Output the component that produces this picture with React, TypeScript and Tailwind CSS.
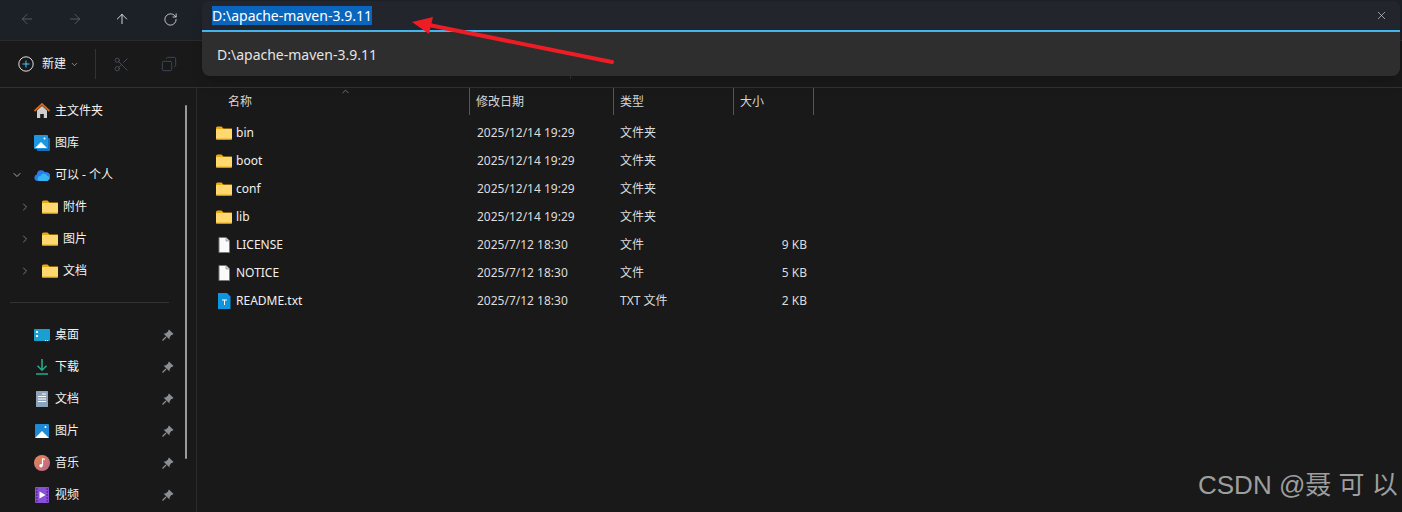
import { ArrowLeft, ArrowRight, ArrowUp, RotateCw, Scissors, Copy, X, ChevronDown, ChevronRight, ChevronUp } from "lucide-react";
import type { ReactNode } from "react";

const FONT = "[font-family:'Noto_Sans','Noto_Sans_CJK_SC',sans-serif]";

function FolderIcon() {
  return (
    <svg width="16" height="14" viewBox="0 0 16 14" className="shrink-0">
      <path d="M0 2a1.5 1.5 0 0 1 1.5-1.5h4L7.5 2.5H16V5H0z" fill="#eeaa0c" />
      <rect x="0" y="3" width="16" height="10.5" rx="1" fill="#ffd86f" />
      <rect x="0" y="12.5" width="16" height="1" rx="0.5" fill="#e5a91f" />
    </svg>
  );
}

function FileIcon() {
  return (
    <svg width="16" height="16" viewBox="0 0 16 16" className="shrink-0">
      <path d="M3 .5h7L13.5 4v11.5H3z" fill="#fafafa" stroke="#7a7a7a" />
      <path d="M10 .5V4h3.5" fill="#d8d8d8" stroke="#7a7a7a" strokeWidth="0.6" />
    </svg>
  );
}

function TextFileIcon() {
  return (
    <svg width="16" height="16" viewBox="0 0 16 16" className="shrink-0">
      <path d="M2 0h9l3.5 3.5V16H2z" fill="#0f95df" />
      <path d="M6 7h5M8.5 7v5" stroke="#fff" strokeWidth="1" />
    </svg>
  );
}

function HomeIcon() {
  return (
    <svg width="16" height="16" viewBox="0 0 16 16">
      <path d="M3 7.5 8 3l5 4.5V15H9.8v-4H6.2v4H3z" fill="#cfcfcf" />
      <path d="M0.5 8 8 1l7.5 7" fill="none" stroke="#d9691a" strokeWidth="1.8" />
    </svg>
  );
}

function GalleryIcon() {
  return (
    <svg width="16" height="16" viewBox="0 0 16 16">
      <rect x="3" y="3" width="13" height="13" rx="1" fill="#1a6fb5" />
      <rect x="0" y="0" width="14" height="14" rx="1" fill="#1e96e0" />
      <path d="M1 13 7 7l6 6z" fill="#fff" />
      <circle cx="10.5" cy="3.5" r="1" fill="#fff" />
    </svg>
  );
}

function CloudIcon() {
  return (
    <svg width="16" height="12" viewBox="0 0 16 12">
      <path d="M3.5 12a3.3 3.3 0 0 1-.6-6.5A4.4 4.4 0 0 1 11 3.2 4.2 4.2 0 0 1 13 12z" fill="#2b7be8" />
      <path d="M6 12a2.5 2.5 0 0 1 .5-5A3.5 3.5 0 0 1 13 6.5 2.8 2.8 0 0 1 13 12z" fill="#35b6f2" />
    </svg>
  );
}

function DesktopIcon() {
  return (
    <svg width="16" height="12" viewBox="0 0 16 12">
      <rect width="16" height="12" rx="1" fill="#1b9fd0" />
      <rect x="2" y="2" width="2" height="2" fill="#fff" />
      <rect x="2" y="6" width="2" height="2" fill="#fff" />
      <rect x="11" y="11" width="1" height="1" fill="#fff" />
      <rect x="13" y="11" width="1" height="1" fill="#fff" />
    </svg>
  );
}

function DownloadIcon() {
  return (
    <svg width="16" height="16" viewBox="0 0 16 16">
      <path d="M8 0v11M3.5 6.8 8 11.2l4.5-4.4M2 15h12" fill="none" stroke="#23ab8b" strokeWidth="1.6" />
    </svg>
  );
}

function DocIcon() {
  return (
    <svg width="16" height="16" viewBox="0 0 16 16">
      <rect x="2" y="0" width="12" height="16" rx="0.5" fill="#8da3ba" />
      <path d="M4 5.5h8M4 8h8M4 10.5h8M8 3h4" stroke="#fff" strokeWidth="1" />
    </svg>
  );
}

function PictureIcon() {
  return (
    <svg width="16" height="16" viewBox="0 0 16 16">
      <rect x="1" y="1" width="14" height="14" rx="1" fill="#1e8ad6" />
      <path d="M1 15 8 8l7 7z" fill="#fff" />
      <circle cx="11.5" cy="4" r="1" fill="#fff" />
    </svg>
  );
}

function MusicIcon() {
  return (
    <svg width="16" height="16" viewBox="0 0 16 16">
      <defs>
        <linearGradient id="music" x1="0" y1="0" x2="1" y2="1">
          <stop offset="0" stopColor="#e88a4f" />
          <stop offset="1" stopColor="#b9628f" />
        </linearGradient>
      </defs>
      <circle cx="8" cy="8" r="8" fill="url(#music)" />
      <path d="M8.5 3.5v7M8.5 3.5l2.5 1" stroke="#fff" strokeWidth="1.2" fill="none" />
      <circle cx="7" cy="10.8" r="1.7" fill="#fff" />
    </svg>
  );
}

function VideoIcon() {
  return (
    <svg width="16" height="16" viewBox="0 0 16 16">
      <rect x="1" y="0" width="14" height="16" rx="1" fill="#8a4fd8" />
      <path d="M5.5 4.5 11.5 8l-6 3.500z" fill="#fff" />
      <path d="M2 2h1.500M2 5h1.500M2 8h1.500M2 11h1.500M2 14h1.500M12.500 2H14M12.500 5H14M12.500 8H14M12.500 11H14M12.500 14H14" stroke="#2d1650" strokeWidth="1" />
    </svg>
  );
}

function PinIcon() {
  return (
    <svg width="12" height="12" viewBox="0 0 12 12" className="shrink-0">
      <path d="M7 0.500 11.500 5 10 6 9.500 5.800 7.500 8.500 7.500 10.500 1.500 4.500 3.500 4.500 6.200 2.500 6 2z" fill="#8a8f94" />
      <path d="M4 8 .5 11.500" stroke="#8a8f94" strokeWidth="1.200" />
    </svg>
  );
}

function NavRow({ icon, label, depth = 0, chevron, pinned }: { icon: ReactNode; label: string; depth?: 0 | 1; chevron?: "open" | "closed"; pinned?: boolean }) {
  return (
    <div className={`flex h-8 items-center text-[12px] text-[#f2f2f2] ${depth === 1 ? "pl-[18px]" : "pl-[10px]"}`}>
      <span className="flex w-[14px] shrink-0 items-center justify-center">
        {chevron === "open" && <ChevronDown size={12} strokeWidth={2} className="text-[#a8a8a8]" />}
        {chevron === "closed" && <ChevronRight size={12} strokeWidth={2} className="text-[#777]" />}
      </span>
      <span className="ml-[10px] flex w-4 shrink-0 items-center justify-center">{icon}</span>
      <span className="ml-[5px] flex-1 whitespace-nowrap">{label}</span>
      {pinned && <span className="mr-[22px]"><PinIcon /></span>}
    </div>
  );
}

const files = [
  { name: "bin", date: "2025/12/14 19:29", type: "文件夹", size: "", icon: <FolderIcon /> },
  { name: "boot", date: "2025/12/14 19:29", type: "文件夹", size: "", icon: <FolderIcon /> },
  { name: "conf", date: "2025/12/14 19:29", type: "文件夹", size: "", icon: <FolderIcon /> },
  { name: "lib", date: "2025/12/14 19:29", type: "文件夹", size: "", icon: <FolderIcon /> },
  { name: "LICENSE", date: "2025/7/12 18:30", type: "文件", size: "9 KB", icon: <FileIcon /> },
  { name: "NOTICE", date: "2025/7/12 18:30", type: "文件", size: "5 KB", icon: <FileIcon /> },
  { name: "README.txt", date: "2025/7/12 18:30", type: "TXT 文件", size: "2 KB", icon: <TextFileIcon /> },
];

export default function App() {
  return (
    <div className={`relative flex h-[512px] w-[1402px] flex-col overflow-hidden bg-[#191919] ${FONT}`}>
      {/* Nav bar */}
      <div className="flex h-[41px] shrink-0 items-center border-b border-[#2b2b2b] bg-[#1c2027] pl-[19px] pb-[2px]">
        <ArrowLeft size={16} strokeWidth={1.300} className="text-[#5f6368]" />
        <ArrowRight size={16} strokeWidth={1.300} className="ml-[32px] text-[#5f6368]" />
        <ArrowUp size={16} strokeWidth={1.300} className="ml-[31px] text-[#f0f0f0]" />
        <RotateCw size={15} strokeWidth={1.300} className="ml-[33px] text-[#e8e8e8]" />
      </div>

      {/* Toolbar */}
      <div className="flex h-[47px] shrink-0 items-center border-b border-[#313131] bg-[#191919] pl-[18px]">
        <svg width="16" height="16" viewBox="0 0 16 16" className="shrink-0">
          <circle cx="8" cy="8" r="7.200" fill="none" stroke="#e0e0e0" strokeWidth="1" />
          <path d="M8 4.500v7M4.500 8h7" stroke="#4cc2ff" strokeWidth="1" />
        </svg>
        <span className="ml-2 text-[12px] text-[#f2f2f2]">新建</span>
        <ChevronDown size={9} strokeWidth={1.600} className="ml-[4px] text-[#cfcfcf]" />
        <div className="ml-[16px] h-[30px] w-px bg-[#333]" />
        <Scissors size={17} strokeWidth={1.100} className="ml-[17px] -scale-y-100 text-[#4a5c68]" />
        <Copy size={16} strokeWidth={1.100} className="ml-[31px] -scale-x-100 text-[#46596a]" />
        <div className="ml-[393px] h-[30px] w-px bg-[#333]" />
      </div>

      <div className="flex min-h-0 flex-1">
        {/* Sidebar */}
        <aside className="relative w-[197px] shrink-0 border-r border-[#2b2b2b] pt-[7px]">
          <NavRow icon={<HomeIcon />} label="主文件夹" />
          <NavRow icon={<GalleryIcon />} label="图库" />
          <NavRow icon={<CloudIcon />} label="可以 - 个人" chevron="open" />
          <NavRow icon={<FolderIcon />} label="附件" depth={1} chevron="closed" />
          <NavRow icon={<FolderIcon />} label="图片" depth={1} chevron="closed" />
          <NavRow icon={<FolderIcon />} label="文档" depth={1} chevron="closed" />
          <div className="mt-[15px] mb-4 ml-[10px] h-px w-[159px] bg-[#333]" />
          <NavRow icon={<DesktopIcon />} label="桌面" pinned />
          <NavRow icon={<DownloadIcon />} label="下载" pinned />
          <NavRow icon={<DocIcon />} label="文档" pinned />
          <NavRow icon={<PictureIcon />} label="图片" pinned />
          <NavRow icon={<MusicIcon />} label="音乐" pinned />
          <NavRow icon={<VideoIcon />} label="视频" pinned />
          <div className="absolute top-[17px] left-[185px] h-[354px] w-[2px] rounded-full bg-[#9a9a9a]" />
        </aside>

        {/* File list */}
        <main className="relative flex-1 text-[12px]">
          <ChevronUp size={11} strokeWidth={1.300} className="absolute top-[-2px] left-[143px] text-[#a8a8a8]" />
          <div className="flex h-[27px] text-[#d6d6d6]">
            <div className="w-[273px] border-r border-[#555] pt-[5px] pl-[31px]">名称</div>
            <div className="w-[144px] border-r border-[#555] pt-[5px] pl-[6px]">修改日期</div>
            <div className="w-[120px] border-r border-[#555] pt-[5px] pl-[6px]">类型</div>
            <div className="w-[80px] border-r border-[#555] pt-[5px] pl-[6px]">大小</div>
          </div>
          <div className="pt-[4px]">
            {files.map((f) => (
              <div key={f.name} className="flex h-7 items-center text-[#dcdcdc]">
                <div className="flex w-[273px] items-center gap-[4px] pl-[19px] text-[#f0f0f0]">
                  <span className="flex w-4 justify-center">{f.icon}</span>
                  {f.name}
                </div>
                <div className="w-[144px] pl-[7px]">{f.date}</div>
                <div className="w-[120px] pl-[6px]">{f.type}</div>
                <div className="w-[73px] text-right">{f.size}</div>
              </div>
            ))}
          </div>
        </main>
      </div>

      {/* Address bar dropdown */}
      <div className="absolute top-px left-[202px] flex h-[75px] w-[1198px] flex-col overflow-hidden rounded-lg bg-[#2e2e2e] shadow-lg">
        <div className="flex h-[31px] shrink-0 items-center border-b-2 border-[#43b5ec] bg-[#22252b] pl-[10px]">
          <span className="bg-[#0a66bd] text-[14px] leading-[19px] text-white">D:\apache-maven-3.9.11</span>
          <X size={13} strokeWidth={1.300} className="mr-[12px] ml-auto text-[#cfcfcf]" />
        </div>
        <div className="flex flex-1 items-center pl-[15px] text-[14px] text-[#e4e4e4]">D:\apache-maven-3.9.11</div>
      </div>

      {/* Annotation arrow */}
      <svg width="1402" height="512" viewBox="0 0 1402 512" className="pointer-events-none absolute inset-0">
        <path d="M612 62 424 24" stroke="#ee1c25" strokeWidth="4" strokeLinecap="round" />
        <path d="M412 22 433 17 429 34z" fill="#ee1c25" />
      </svg>

      {/* Watermark */}
      <span className="absolute top-[468px] left-[1198px] font-['Liberation_Sans','Noto_Sans_CJK_SC',sans-serif] text-[26px] leading-[34px] whitespace-nowrap text-[#9e9e9e]">CSDN @聂 可 以</span>
    </div>
  );
}
